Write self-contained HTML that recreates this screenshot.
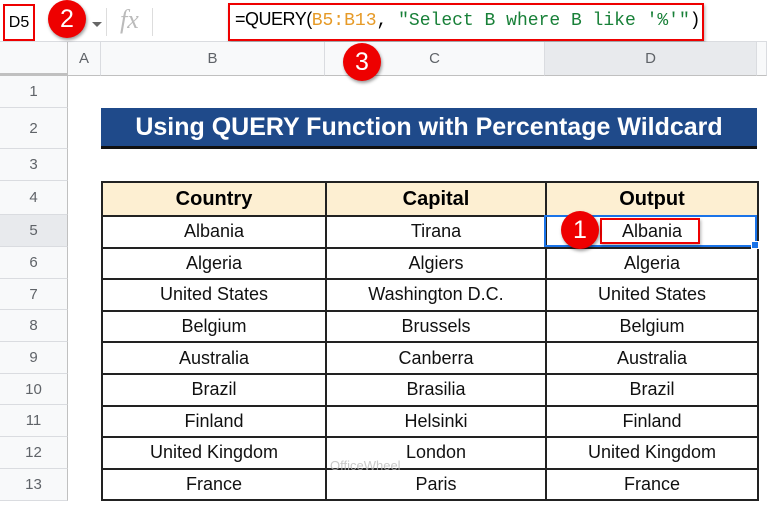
<!DOCTYPE html><html><head><style>
*{margin:0;padding:0;box-sizing:border-box}
body{width:767px;height:509px;background:#fff;font-family:"Liberation Sans",Arial,sans-serif;position:relative;overflow:hidden}
.a{position:absolute}
.rh{position:absolute;left:0;width:68px;background:#f8f9fa;border-bottom:1px solid #dadce0;border-right:1px solid #c0c0c0;color:#5f6368;font-size:15px;display:flex;align-items:center;justify-content:center}
.ch{position:absolute;top:42px;height:34px;background:#f8f9fa;border-right:1px solid #dadce0;border-bottom:1px solid #c0c0c0;color:#5f6368;font-size:15px;display:flex;align-items:center;justify-content:center}
table{position:absolute;left:101px;top:181px;border-collapse:collapse}
td{border:2px solid #222;text-align:center;font-size:18px;color:#111;height:31.6px;padding:0}
th{border:2px solid #222;background:#fdefd2;font-size:20px;height:34px}
.c{position:absolute;width:38px;height:38px;border-radius:50%;background:#e00;color:#fff;font-size:25px;display:flex;align-items:center;justify-content:center;box-shadow:1px 2px 3px rgba(0,0,0,.4)}
</style></head><body>
<div class="a" style="left:0;top:0;width:767px;height:42px;border-bottom:1px solid #dadce0"></div>
<div class="a" style="left:3px;top:4px;width:32px;height:37px;border:2px solid #e00;font-size:16px;display:flex;align-items:center;justify-content:center">D5</div>
<div class="a" style="left:92px;top:22px;border-left:5px solid transparent;border-right:5px solid transparent;border-top:5px solid #666"></div>
<div class="a" style="left:106px;top:8px;width:1px;height:28px;background:#ddd"></div>
<div class="a" style="left:120px;top:5px;color:#bbb;font-style:italic;font-family:'Liberation Serif',serif;font-size:26px">fx</div>
<div class="a" style="left:152px;top:8px;width:1px;height:28px;background:#ddd"></div>
<div class="a" style="left:228px;top:3px;width:476px;height:38px;border:2px solid #e00;box-shadow:1px 2px 3px rgba(0,0,0,.3)"></div>
<div class="a" style="left:235px;top:9px;font-size:18px;white-space:nowrap;letter-spacing:-0.5px">=QUERY(<span style="font-family:'Liberation Mono',monospace;letter-spacing:0"><span style="color:#e69a27">B5:B13</span>, <span style="color:#188038">"Select B where B like '%'"</span>)</span></div>
<div class="rh" style="top:42px;height:34px;border-bottom:3px solid #c0c0c0"></div>
<div class="ch" style="left:68px;width:33px">A</div>
<div class="ch" style="left:101px;width:224px">B</div>
<div class="ch" style="left:325px;width:220px">C</div>
<div class="ch" style="left:545px;width:212px;background:#e8eaed">D</div>
<div class="ch" style="left:757px;width:10px"></div>
<div class="rh" style="top:76px;height:32px">1</div>
<div class="rh" style="top:108px;height:41px">2</div>
<div class="rh" style="top:149px;height:32px">3</div>
<div class="rh" style="top:181px;height:34px">4</div>
<div class="rh" style="top:215px;height:32px;background:#e8eaed">5</div>
<div class="rh" style="top:247px;height:32px">6</div>
<div class="rh" style="top:279px;height:31px">7</div>
<div class="rh" style="top:310px;height:32px">8</div>
<div class="rh" style="top:342px;height:32px">9</div>
<div class="rh" style="top:374px;height:31px">10</div>
<div class="rh" style="top:405px;height:32px">11</div>
<div class="rh" style="top:437px;height:32px">12</div>
<div class="rh" style="top:469px;height:32px">13</div>
<div class="a" style="left:101px;top:108px;width:656px;height:41px;background:#1f4a8a;border-bottom:3px solid #111;color:#fff;font-weight:bold;font-size:25px;display:flex;align-items:center;justify-content:center">Using QUERY Function with Percentage Wildcard</div>
<table>
<tr><th style="width:224px">Country</th><th style="width:220px">Capital</th><th style="width:212px">Output</th></tr>
<tr><td>Albania</td><td>Tirana</td><td>Albania</td></tr>
<tr><td>Algeria</td><td>Algiers</td><td>Algeria</td></tr>
<tr><td>United States</td><td>Washington D.C.</td><td>United States</td></tr>
<tr><td>Belgium</td><td>Brussels</td><td>Belgium</td></tr>
<tr><td>Australia</td><td>Canberra</td><td>Australia</td></tr>
<tr><td>Brazil</td><td>Brasilia</td><td>Brazil</td></tr>
<tr><td>Finland</td><td>Helsinki</td><td>Finland</td></tr>
<tr><td>United Kingdom</td><td>London</td><td>United Kingdom</td></tr>
<tr><td>France</td><td>Paris</td><td>France</td></tr>
</table>
<div class="a" style="left:544px;top:215px;width:213px;height:32px;border:2px solid #1a73e8"></div>
<div class="a" style="left:751px;top:241px;width:8px;height:8px;background:#1a73e8;border:1px solid #fff"></div>
<div class="a" style="left:600px;top:218px;width:100px;height:26px;border:2px solid #e00;box-shadow:1px 2px 3px rgba(0,0,0,.3)"></div>
<div class="c" style="left:561px;top:211px">1</div>
<div class="c" style="left:48px;top:0px">2</div>
<div class="c" style="left:343px;top:43px">3</div>
<div class="a" style="left:330px;top:458px;color:#bbb;font-size:13px;opacity:.8">OfficeWheel</div>
</body></html>
